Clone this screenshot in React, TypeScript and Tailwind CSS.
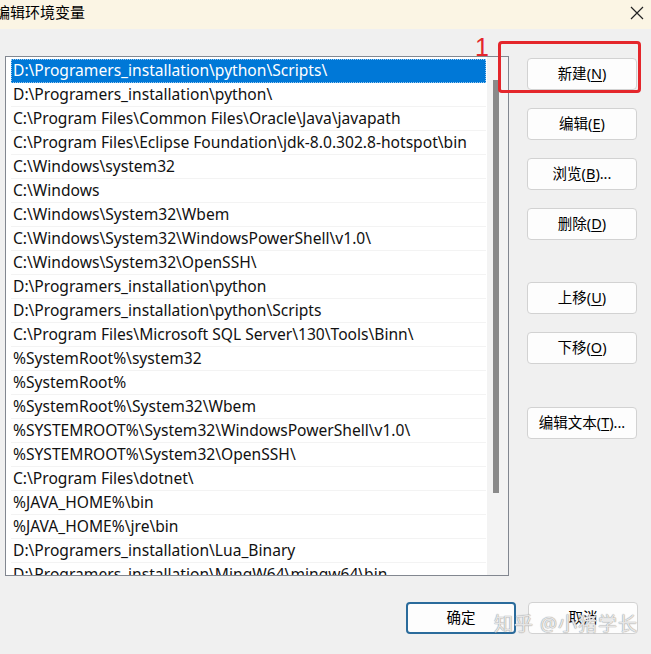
import React from "react";

const paths = [
  "D:\\Programers_installation\\python\\Scripts\\",
  "D:\\Programers_installation\\python\\",
  "C:\\Program Files\\Common Files\\Oracle\\Java\\javapath",
  "C:\\Program Files\\Eclipse Foundation\\jdk-8.0.302.8-hotspot\\bin",
  "C:\\Windows\\system32",
  "C:\\Windows",
  "C:\\Windows\\System32\\Wbem",
  "C:\\Windows\\System32\\WindowsPowerShell\\v1.0\\",
  "C:\\Windows\\System32\\OpenSSH\\",
  "D:\\Programers_installation\\python",
  "D:\\Programers_installation\\python\\Scripts",
  "C:\\Program Files\\Microsoft SQL Server\\130\\Tools\\Binn\\",
  "%SystemRoot%\\system32",
  "%SystemRoot%",
  "%SystemRoot%\\System32\\Wbem",
  "%SYSTEMROOT%\\System32\\WindowsPowerShell\\v1.0\\",
  "%SYSTEMROOT%\\System32\\OpenSSH\\",
  "C:\\Program Files\\dotnet\\",
  "%JAVA_HOME%\\bin",
  "%JAVA_HOME%\\jre\\bin",
  "D:\\Programers_installation\\Lua_Binary",
  "D:\\Programers_installation\\MingW64\\mingw64\\bin",
];

function Btn({ label, hot, tail = "", primary = false, className = "" }: { label: string; hot: string; tail?: string; primary?: boolean; className?: string }) {
  return (
    <button
      type="button"
      className={
        "w-[110px] h-[32px] rounded-[4px] text-[14.5px] text-black flex items-center justify-center " +
        (primary ? "bg-[#fdfdfd] border-2 border-[#2a6b9b] " : "bg-[#fdfdfd] border border-[#d2d2d2] ") +
        className
      }
    >
      {hot ? (
        <span>
          {label}(<span className="underline underline-offset-2">{hot}</span>){tail}
        </span>
      ) : (
        <span>{label}</span>
      )}
    </button>
  );
}

export default function App() {
  return (
    <div
      className="relative w-[651px] h-[654px] bg-[#f0f0f0] overflow-hidden"
      style={{ fontFamily: '"Noto Sans", "Noto Sans CJK SC", sans-serif' }}
    >
      {/* title bar */}
      <div className="h-[29px] bg-[#fbf5e4] flex items-start justify-between">
        <span className="-ml-[5px] mt-[1px] text-[15px] leading-[22px] text-black" style={{ fontFamily: '"Noto Sans CJK SC", sans-serif' }}>
          编辑环境变量
        </span>
        <svg width="14" height="14" viewBox="0 0 14 14" className="mr-[7px] mt-[6px]">
          <path d="M1 1 L13 13 M13 1 L1 13" stroke="#222" strokeWidth="1.2" />
        </svg>
      </div>

      <div className="flex mt-[27px] ml-[5px]">
        {/* list box */}
        <div className="w-[504px] h-[520px] border border-[#828790] bg-white flex overflow-hidden">
          <div className="w-[475px] ml-[5px] pt-[2px]">
            {paths.map((p, i) => (
              <div
                key={p}
                className={
                  "h-[24px] flex items-center pl-[2px] whitespace-nowrap text-[15.6px] " +
                  (i === 0
                    ? "bg-[#0078d7] text-white outline-1 outline-dotted outline-[#99c9ef] -outline-offset-1"
                    : "text-[#111] border-b border-[#f3f3f3]")
                }
              >
                {p}
              </div>
            ))}
          </div>
          <div className="flex-1 bg-[#f3f3f3] ml-[1px] pt-[23px] pl-[6px]">
            <div className="w-[6px] h-[413px] bg-[#8a8a8a]" />
          </div>
        </div>

        {/* right buttons */}
        <div className="flex flex-col ml-[18px] mt-[2px]">
          <Btn label="新建" hot="N" />
          <Btn label="编辑" hot="E" className="mt-[18px]" />
          <Btn label="浏览" hot="B" tail="..." className="mt-[18px]" />
          <Btn label="删除" hot="D" className="mt-[18px]" />
          <Btn label="上移" hot="U" className="mt-[42px]" />
          <Btn label="下移" hot="O" className="mt-[18px]" />
          <Btn label="编辑文本" hot="T" tail="..." className="mt-[43px]" />
        </div>
      </div>

      {/* bottom buttons */}
      <div className="flex justify-end gap-[12px] mt-[26px] mr-[13px]">
        <Btn label="确定" hot="" primary />
        <Btn label="取消" hot="" />
      </div>

      {/* annotation */}
      <div className="absolute left-[498px] top-[41px] w-[143px] h-[52px] border-[3px] border-[#e4262b] rounded-[4px]" />
      <div className="absolute left-[475px] top-[35px] text-[25px] text-[#e4262b] leading-none" style={{ fontFamily: '"Liberation Sans", sans-serif' }}>
        1
      </div>

      {/* watermark */}
      <div
        className="absolute left-[494px] top-[610px] text-[19px] text-white/75 tracking-[1px]"
        style={{ textShadow: "0 0 1px #999, 0 0 1px #999" }}
      >
        知乎 @小猪学长
      </div>
    </div>
  );
}
